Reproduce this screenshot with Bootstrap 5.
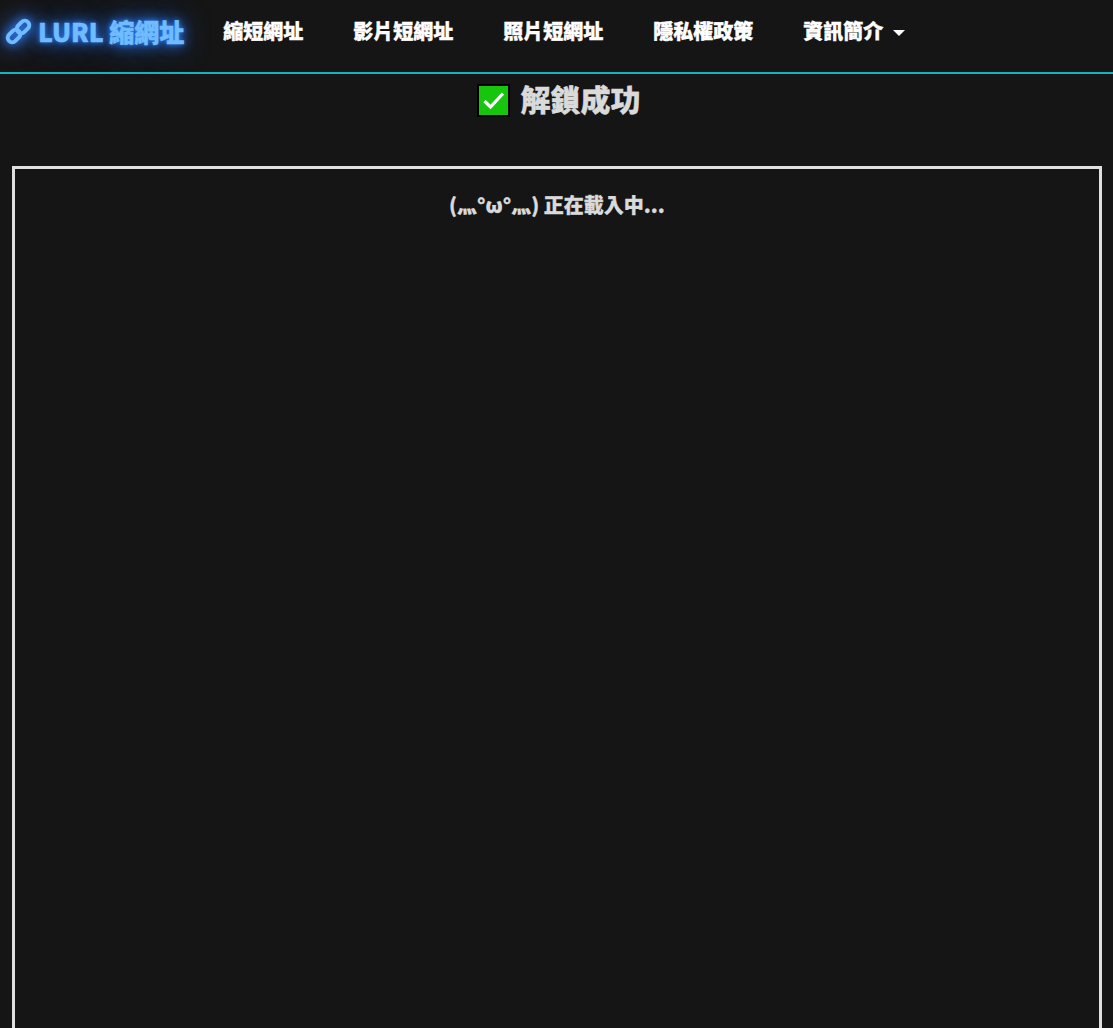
<!DOCTYPE html>
<html lang="zh-Hant">
<head>
<meta charset="utf-8">
<title>LURL 縮網址</title>
<link href="https://cdn.jsdelivr.net/npm/bootstrap@5.3.0/dist/css/bootstrap.min.css" rel="stylesheet">
<style>
html, body { height: 100%; }
body { background: #151515; color: #dcdcdc; font-family: "Noto Sans CJK TC", "Noto Sans", sans-serif; overflow: hidden; }
.top-bar { height: 74px; border-bottom: 2px solid #17b3c1; background: #151515; padding: 0 0 10px; align-items: center; }
.logo-link { color: #70bcff; font-size: 25px; font-weight: 900; -webkit-text-stroke: .5px #70bcff; padding: 0 14px 0 5px; margin: 0; line-height: 64px; display: flex; align-items: center; gap: 6px; text-shadow: 0 0 5px #2f7fff, 0 0 14px #2f7fff, 0 0 28px #1f5fc0; }
.logo-link:hover { color: #70bcff; }
.logo-icon { width: 27px; height: 27px; filter: drop-shadow(0 0 4px #2f7fff) drop-shadow(0 0 10px #2f7fff); }
.navbar-nav .top-link.nav-link { color: #fff; font-size: 20px; font-weight: 900; -webkit-text-stroke: .4px #fff; padding: 0 25px; line-height: 64px; }
.navbar-nav .top-link.nav-link:hover, .navbar-nav .top-link.nav-link:focus { color: #fff; }
.top-link.dropdown-toggle::after { margin-left: 10px; vertical-align: 3px; }
.unlock-title { font-size: 30px; font-weight: 900; -webkit-text-stroke: .4px #dadada; color: #dadada; margin: 0; height: 92px; padding: 2px 0 0 4px; line-height: 44px; display: flex; justify-content: center; gap: 11px; }
.check-box { width: 33px; height: 33px; margin-top: 8px; flex: none; }
.frame-box { border: 3px solid #e0e0e0; margin: 0 11px 0 12px; height: 1000px; text-align: center; font-size: 20px; font-weight: 900; -webkit-text-stroke: .3px #dadada; color: #dadada; padding-top: 20px; line-height: 32px; }
</style>
</head>
<body>
<nav class="navbar navbar-expand top-bar">
  <a class="navbar-brand logo-link" href="#">
    <svg class="logo-icon" viewBox="0 0 27 27" fill="none" stroke="#70bcff" stroke-width="4" aria-hidden="true">
      <rect x="2" y="13.500" width="14" height="9" rx="4.500" transform="rotate(-45 9 18)"/>
      <rect x="11" y="4.500" width="14" height="9" rx="4.500" transform="rotate(-45 18 9)"/>
    </svg>
    LURL 縮網址
  </a>
  <ul class="navbar-nav flex-row">
    <li class="nav-item"><a class="nav-link top-link" href="#">縮短網址</a></li>
    <li class="nav-item"><a class="nav-link top-link" href="#">影片短網址</a></li>
    <li class="nav-item"><a class="nav-link top-link" href="#">照片短網址</a></li>
    <li class="nav-item"><a class="nav-link top-link" href="#">隱私權政策</a></li>
    <li class="nav-item dropdown"><a class="nav-link top-link dropdown-toggle" href="#" role="button" data-bs-toggle="dropdown">資訊簡介</a></li>
  </ul>
</nav>
<main>
  <h1 class="unlock-title">
    <svg class="check-box" viewBox="0 0 33 33" aria-hidden="true">
      <rect width="33" height="33" fill="#000"/>
      <rect x="2" y="2" width="29" height="29" fill="#16c60c"/>
      <path d="M7.500 17l6 6L26 9.500" fill="none" stroke="#fff" stroke-width="3.200"/>
    </svg>
    <span>解鎖成功</span>
  </h1>
  <div class="frame-box">(灬°ω°灬) 正在載入中...</div>
</main>
<script src="https://cdn.jsdelivr.net/npm/bootstrap@5.3.0/dist/js/bootstrap.bundle.min.js"></script>
</body>
</html>
